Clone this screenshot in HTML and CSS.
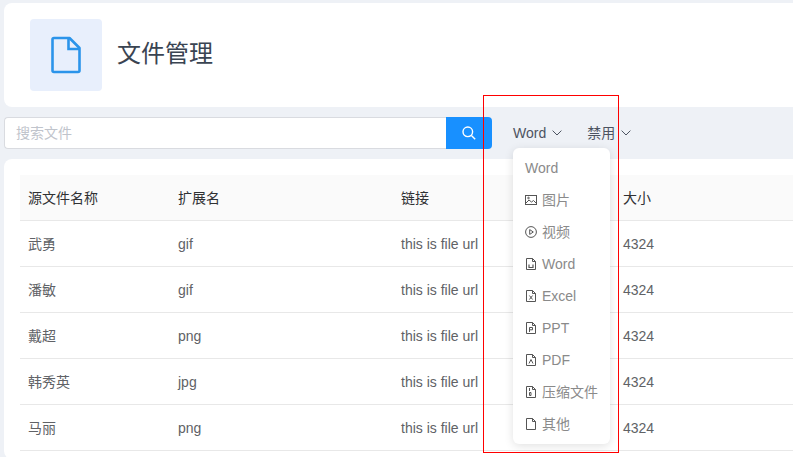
FILE: index.html
```html
<!DOCTYPE html>
<html lang="zh">
<head>
<meta charset="utf-8">
<title>文件管理</title>
<link rel="stylesheet" href="styles.css">
</head>
<body>
<div class="page">
  <header class="head-card">
    <div class="head-icon">
      <svg width="30" height="38" viewBox="0 0 30 38" fill="none"><path d="M3 2H18.5L28.5 12V34.5a1.5 1.5 0 0 1-1.5 1.5H3A1.5 1.5 0 0 1 1.5 34.5V3.5A1.5 1.5 0 0 1 3 2Z" stroke="#2b94ea" stroke-width="2.6" stroke-linejoin="round"/><path d="M17.5 2.5V13H28" stroke="#2b94ea" stroke-width="2.6"/></svg>
    </div>
    <h1 class="head-title">文件管理</h1>
  </header>

  <div class="toolbar">
    <div class="search">
      <input class="search-input" placeholder="搜索文件">
      <button class="search-btn" aria-label="搜索">
        <svg width="14" height="14" viewBox="0 0 14 14" fill="none" stroke="#fff" stroke-width="1.4"><circle cx="5.8" cy="5.8" r="4.8"/><path d="M9.4 9.4L13.2 13.2"/></svg>
      </button>
    </div>
    <div class="filter filter-type">
      <span>Word</span>
      <svg class="chev" width="10" height="6" viewBox="0 0 10 6" fill="none" stroke="#4d5461"><path d="M.6.6L5 5l4.4-4.4"/></svg>
      <ul class="menu">
        <li class="menu-item">Word</li>
        <li class="menu-item"><svg class="mi" viewBox="0 0 12 12" fill="none" stroke="#555"><rect x=".5" y="1.5" width="11" height="9"/><path d="M1 9l3-3 2.5 2 2-1.5L11 9"/><circle cx="3.5" cy="4" r=".8"/></svg>图片</li>
        <li class="menu-item"><svg class="mi" viewBox="0 0 12 12" fill="none" stroke="#555"><circle cx="6" cy="6" r="5.4"/><path d="M4.7 3.6L8.3 6 4.7 8.4Z"/></svg>视频</li>
        <li class="menu-item"><svg class="mi" viewBox="0 0 12 12" fill="none" stroke="#555"><path d="M1.5.5H7.5L10.5 3.5V11.5H1.5Z"/><path d="M7.5.5V3.5H10.5"/><path d="M4 6.5V9.5H8V6.5" stroke-width="1.2"/></svg>Word</li>
        <li class="menu-item"><svg class="mi" viewBox="0 0 12 12" fill="none" stroke="#555"><path d="M1.5.5H7.5L10.5 3.5V11.5H1.5Z"/><path d="M7.5.5V3.5H10.5"/><path d="M4.4 5.5L7.6 9.5M7.6 5.5L4.4 9.5"/></svg>Excel</li>
        <li class="menu-item"><svg class="mi" viewBox="0 0 12 12" fill="none" stroke="#555"><path d="M1.5.5H7.5L10.5 3.5V11.5H1.5Z"/><path d="M7.5.5V3.5H10.5"/><path d="M4.5 10V5.5H7.5V7.8H4.5"/></svg>PPT</li>
        <li class="menu-item"><svg class="mi" viewBox="0 0 12 12" fill="none" stroke="#555"><path d="M1.5.5H7.5L10.5 3.5V11.5H1.5Z"/><path d="M7.5.5V3.5H10.5"/><path d="M4 9.5L6 5.5L8 9.5"/></svg>PDF</li>
        <li class="menu-item"><svg class="mi" viewBox="0 0 12 12" fill="none" stroke="#555"><path d="M1.5.5H7.5L10.5 3.5V11.5H1.5Z"/><path d="M7.5.5V3.5H10.5"/><path d="M4.5 2V5M4.5 6.5h1.5V9.5H4.5Z"/></svg>压缩文件</li>
        <li class="menu-item"><svg class="mi" viewBox="0 0 12 12" fill="none" stroke="#555"><path d="M1.5.5H7.5L10.5 3.5V11.5H1.5Z"/><path d="M7.5.5V3.5H10.5"/></svg>其他</li>
      </ul>
    </div>
    <div class="filter">
      <span>禁用</span>
      <svg class="chev" width="10" height="6" viewBox="0 0 10 6" fill="none" stroke="#4d5461"><path d="M.6.6L5 5l4.4-4.4"/></svg>
    </div>
  </div>

  <section class="table-card">
    <table class="table">
      <thead>
        <tr><th class="c1">源文件名称</th><th class="c2">扩展名</th><th class="c3">链接</th><th class="c4">大小</th><th></th></tr>
      </thead>
      <tbody>
        <tr><td>武勇</td><td>gif</td><td>this is file url</td><td>4324</td><td></td></tr>
        <tr><td>潘敏</td><td>gif</td><td>this is file url</td><td>4324</td><td></td></tr>
        <tr><td>戴超</td><td>png</td><td>this is file url</td><td>4324</td><td></td></tr>
        <tr><td>韩秀英</td><td>jpg</td><td>this is file url</td><td>4324</td><td></td></tr>
        <tr><td>马丽</td><td>png</td><td>this is file url</td><td>4324</td><td></td></tr>
      </tbody>
    </table>
  </section>
</div>
<div class="highlight"></div>
</body>
</html>
```
FILE: styles.css
```css
* { box-sizing: border-box; }
html, body { margin: 0; height: 457px; overflow: hidden; }
body {
  position: relative;
  background: #eef1f6;
  font-family: "Liberation Sans", "Noto Sans CJK SC", sans-serif;
  font-size: 14px;
  line-height: 20px;
  color: #606266;
}
.page { width: 1000px; padding: 3px 0 0 4px; }
.head-card {
  display: flex;
  align-items: center;
  gap: 15px;
  height: 104px;
  padding-left: 26px;
  background: #fff;
  border-radius: 8px;
}
.head-icon {
  width: 72px;
  height: 72px;
  display: flex;
  align-items: center;
  justify-content: center;
  background: #e8effc;
  border-radius: 4px;
}
.head-title { margin: 0 0 2px; font-size: 24px; line-height: 32px; font-weight: 400; color: #3a4452; }
.toolbar {
  display: flex;
  align-items: center;
  height: 32px;
  margin: 10px 0;
}
.search { display: flex; width: 488px; height: 32px; }
.search-input {
  flex: 1;
  min-width: 0;
  height: 32px;
  padding: 0 11px;
  border: 1px solid #d9dbe0;
  border-right: 0;
  border-radius: 4px 0 0 4px;
  font: inherit;
  background: #fff;
  outline: 0;
}
.search-input::placeholder { color: #c0c4cc; opacity: 1; }
.search-btn {
  width: 46px;
  display: flex;
  align-items: center;
  justify-content: center;
  padding: 0;
  border: 0;
  border-radius: 0 4px 4px 0;
  background: #1890ff;
}
.filter {
  position: relative;
  display: flex;
  align-items: center;
  gap: 6px;
  margin-left: 21px;
  color: #4d5461;
}
.filter + .filter { margin-left: 25px; }
.chev { display: block; }
.menu {
  position: absolute;
  z-index: 2;
  left: 0;
  top: 25px;
  width: 97px;
  margin: 0;
  padding: 4px 0;
  list-style: none;
  background: #fff;
  border-radius: 6px;
  box-shadow: 0 2px 10px rgba(0, 0, 0, .12);
}
.menu-item {
  display: flex;
  align-items: center;
  gap: 5px;
  height: 32px;
  padding-left: 12px;
  color: #8a8a8a;
  white-space: nowrap;
}
.mi { width: 12px; height: 12px; flex: none; }
.table-card {
  height: 300px;
  padding: 16px;
  background: #fff;
  border-radius: 8px;
}
.table { width: 960px; table-layout: fixed; border-collapse: separate; border-spacing: 0; }
.c1 { width: 150px; }
.c2 { width: 223px; }
.c3 { width: 222px; }
.c4 { width: 150px; }
th, td {
  height: 46px;
  padding: 0 8px;
  text-align: left;
  font-weight: 400;
  border-bottom: 1px solid #e8e8e8;
}
th { background: #fafafa; color: #303133; }
.highlight {
  position: absolute;
  left: 483px;
  top: 95px;
  width: 136px;
  height: 358px;
  border: 1px solid #f00;
  z-index: 5;
}
```
